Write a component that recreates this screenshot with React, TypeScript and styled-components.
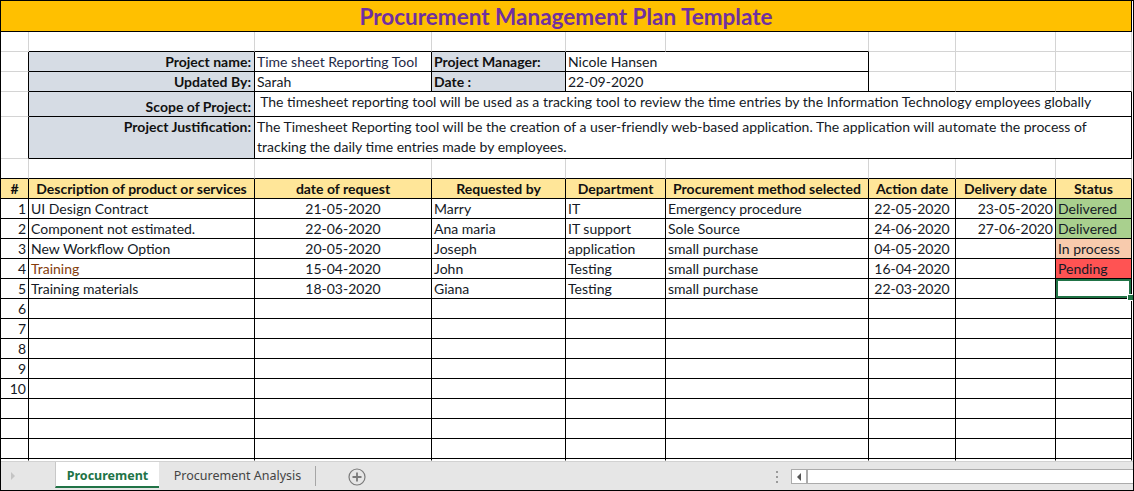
import React from 'react'
import styled, { createGlobalStyle } from 'styled-components'

type Line = 'k' | 'g' | 'n'

const lineColor = (l?: Line) => (l === 'k' ? '#000' : l === 'n' ? 'transparent' : '#d4d4d4')

const GlobalStyle = createGlobalStyle`
  html, body {
    margin: 0;
    padding: 0;
    background: #fff;
  }
`

const Frame = styled.div`
  width: 1134px;
  height: 491px;
  box-sizing: border-box;
  border: 1px solid #000;
  background: #fff;
  display: flex;
  flex-direction: column;
  overflow: hidden;
`

const Sheet = styled.div`
  display: grid;
  grid-template-columns: 28px 226px 177px 134px 100px 203px 87px 100px 76px;
  grid-template-rows: 31px 20px 20px 20px 25px 42px 20px 20px repeat(13, 20px) 2px;
  font-family: Lato, 'Liberation Sans', sans-serif;
  font-size: 14px;
  color: #151a26;
`

type CellProps = {
  $span?: number
  $r?: Line
  $b?: Line
  $bg?: string
  $align?: 'left' | 'center' | 'right'
  $valign?: 'top' | 'middle' | 'bottom'
  $bold?: boolean
  $color?: string
}

const justify = { left: 'flex-start', center: 'center', right: 'flex-end' }
const alignItems = { top: 'flex-start', middle: 'center', bottom: 'flex-end' }

const Cell = styled.div<CellProps>`
  box-sizing: border-box;
  grid-column: span ${(p) => p.$span ?? 1};
  border-right: 1px solid ${(p) => lineColor(p.$r)};
  border-bottom: 1px solid ${(p) => lineColor(p.$b)};
  background: ${(p) => p.$bg ?? 'transparent'};
  display: flex;
  justify-content: ${(p) => justify[p.$align ?? 'left']};
  align-items: ${(p) => alignItems[p.$valign ?? 'middle']};
  padding: 0 2px 0 2px;
  line-height: 19px;
  white-space: pre;
  overflow: hidden;
  font-weight: ${(p) => (p.$bold ? 700 : 400)};
  color: ${(p) => p.$color ?? 'inherit'};
`

const TitleCell = styled(Cell)`
  justify-content: center;
  background: #ffc000;
  color: #7030a0;
  font-size: 22.5px;
  font-weight: 700;
  padding-top: 1px;
`

const LabelCell = styled(Cell)`
  background: #d6dce4;
  font-weight: 700;
  color: #111;
  padding-right: 3px;
`

const WrapCell = styled(Cell)`
  display: block;
  white-space: normal;
  line-height: 20px;
  padding-top: 0;
`

const HeadCell = styled(Cell)`
  background: #ffe699;
  font-weight: 700;
  color: #111;
  justify-content: center;
`

const statusBg: Record<string, string> = {
  Delivered: '#a9d08e',
  'In process': '#f8cbad',
  Pending: '#ff5353',
}

const StatusCell = styled(Cell)<{ $status?: string; $selected?: boolean }>`
  position: relative;
  overflow: visible;
  background: ${(p) => (p.$status ? statusBg[p.$status] : 'transparent')};
  box-shadow: ${(p) => (p.$selected ? 'inset 0 0 0 2px #217346' : 'none')};
`

const FillHandle = styled.span`
  position: absolute;
  right: -3px;
  bottom: -3px;
  width: 5px;
  height: 5px;
  background: #217346;
  border: 1px solid #fff;
  z-index: 2;
`

const TabBar = styled.div`
  flex: 1;
  display: flex;
  align-items: stretch;
  background: #e6e6e6;
  border-top: 1px solid #d2d2d2;
  font-family: 'Noto Sans', 'Open Sans', sans-serif;
  font-size: 12.5px;
`

const NavArea = styled.div`
  width: 54px;
  display: flex;
  align-items: center;
  padding-left: 10px;
  box-sizing: border-box;
`

const NavArrow = styled.span`
  width: 0;
  height: 0;
  border-left: 4px solid #c4c4c4;
  border-top: 4px solid transparent;
  border-bottom: 4px solid transparent;
`

const SheetTab = styled.div<{ $active?: boolean; $width: number }>`
  width: ${(p) => p.$width}px;
  margin-bottom: 2px;
  padding-top: 2px;
  display: flex;
  align-items: center;
  justify-content: center;
  background: ${(p) => (p.$active ? '#fff' : 'transparent')};
  color: ${(p) => (p.$active ? '#217346' : '#444')};
  font-weight: ${(p) => (p.$active ? 700 : 400)};
  border-bottom: 2px solid ${(p) => (p.$active ? '#217346' : 'transparent')};
  border-left: 1px solid ${(p) => (p.$active ? '#c8c8c8' : 'transparent')};
  box-sizing: border-box;
`

const Divider = styled.div`
  width: 1px;
  height: 20px;
  align-self: center;
  background: #a6a6a6;
`

const AddButton = styled.div`
  margin-left: 32px;
  display: flex;
  align-items: center;
  margin-top: 1px;
`

const Spacer = styled.div`
  flex: 1;
`

const Dots = styled.div`
  display: flex;
  flex-direction: column;
  justify-content: center;
  gap: 3px;
  margin-right: 13px;
  margin-top: 1px;

  span {
    width: 2px;
    height: 2px;
    background: #9a9a9a;
  }
`

const ScrollTrack = styled.div`
  width: 342px;
  height: 15px;
  align-self: center;
  margin-top: 1px;
  box-sizing: border-box;
  border: 1px solid #ababab;
  border-right: none;
  background: #fff;
  display: flex;
`

const ScrollButton = styled.div`
  width: 14px;
  border-right: 2px solid #ababab;
  display: flex;
  align-items: center;
  justify-content: center;

  &::before {
    content: '';
    border-right: 4px solid #555;
    border-top: 4px solid transparent;
    border-bottom: 4px solid transparent;
  }
`

const headers = [
  '#',
  'Description of product or services',
  'date of request',
  'Requested by',
  'Department',
  'Procurement method selected',
  'Action date',
  'Delivery date',
  'Status',
]

type Row = {
  desc: string
  requested: string
  by: string
  dept: string
  method: string
  action: string
  delivery: string
  status: string
  descColor?: string
}

const rows: Row[] = [
  { desc: 'UI Design Contract', requested: '21-05-2020', by: 'Marry', dept: 'IT', method: 'Emergency procedure', action: '22-05-2020', delivery: '23-05-2020', status: 'Delivered' },
  { desc: 'Component not estimated.', requested: '22-06-2020', by: 'Ana maria', dept: 'IT support', method: 'Sole Source', action: '24-06-2020', delivery: '27-06-2020', status: 'Delivered' },
  { desc: 'New Workflow Option', requested: '20-05-2020', by: 'Joseph', dept: 'application', method: 'small purchase', action: '04-05-2020', delivery: '', status: 'In process' },
  { desc: 'Training', requested: '15-04-2020', by: 'John', dept: 'Testing', method: 'small purchase', action: '16-04-2020', delivery: '', status: 'Pending', descColor: '#843c0c' },
  { desc: 'Training materials', requested: '18-03-2020', by: 'Giana', dept: 'Testing', method: 'small purchase', action: '22-03-2020', delivery: '', status: '' },
]

const blankRow = (key: string, b: Line, count = 9, r: Line = 'g') =>
  Array.from({ length: count }, (_, i) => <Cell key={`${key}-${i}`} $r={r} $b={b} />)

const App: React.FC = () => {
  const empty = 13 - rows.length

  return (
    <>
      <GlobalStyle />
      <Frame>
        <Sheet>
          <TitleCell $span={9} $r="k" $b="k">
            Procurement Management Plan Template
          </TitleCell>

          {/* spacer row above the project details */}
          <Cell $r="g" $b="g" />
          {blankRow('r2a', 'k', 5)}
          {blankRow('r2b', 'g', 3)}

          <Cell $r="k" $b="g" />
          <LabelCell $r="k" $b="k" $align="right">Project name:</LabelCell>
          <Cell $r="k" $b="k" $color="#1f2b48">Time sheet Reporting Tool</Cell>
          <LabelCell $r="k" $b="k">Project Manager:</LabelCell>
          <Cell $span={2} $r="k" $b="k">Nicole Hansen</Cell>
          {blankRow('r3', 'g', 3)}

          <Cell $r="k" $b="g" />
          <LabelCell $r="k" $b="k" $align="right">Updated By:</LabelCell>
          <Cell $r="k" $b="k">Sarah</Cell>
          <LabelCell $r="k" $b="k">Date :</LabelCell>
          <Cell $span={2} $r="k" $b="k">22-09-2020</Cell>
          {blankRow('r4', 'k', 3)}

          <Cell $r="k" $b="g" />
          <LabelCell $r="k" $b="k" $align="right" $valign="bottom">Scope of Project:</LabelCell>
          <Cell $span={7} $r="k" $b="k" $valign="top">
            {' The timesheet reporting tool will be used as a tracking tool to review the time entries by the Information Technology employees globally'}
          </Cell>

          <Cell $r="k" $b="g" />
          <LabelCell $r="k" $b="k" $align="right" $valign="top">Project Justification:</LabelCell>
          <WrapCell $span={7} $r="k" $b="k">
            The Timesheet Reporting tool will be the creation of a user-friendly web-based application. The application will automate the process of
            <br />
            tracking the daily time entries made by employees.
          </WrapCell>

          {blankRow('r7', 'k')}

          {headers.map((h) => (
            <HeadCell key={h} $r="k" $b="k">
              {h}
            </HeadCell>
          ))}

          {rows.map((row, i) => (
            <React.Fragment key={row.desc}>
              <Cell $r="k" $b="k" $align="right">{i + 1}</Cell>
              <Cell $r="k" $b="k" $color={row.descColor}>{row.desc}</Cell>
              <Cell $r="k" $b="k" $align="center">{row.requested}</Cell>
              <Cell $r="k" $b="k">{row.by}</Cell>
              <Cell $r="k" $b="k">{row.dept}</Cell>
              <Cell $r="k" $b="k">{row.method}</Cell>
              <Cell $r="k" $b="k" $align="center">{row.action}</Cell>
              <Cell $r="k" $b="k" $align="right">{row.delivery}</Cell>
              <StatusCell $r="k" $b="k" $status={row.status || undefined} $selected={!row.status}>
                {row.status}
                {!row.status && <FillHandle />}
              </StatusCell>
            </React.Fragment>
          ))}

          {Array.from({ length: empty }, (_, i) => (
            <React.Fragment key={`e${i}`}>
              <Cell $r="k" $b="k" $align="right">{i + rows.length + 1 <= 10 ? i + rows.length + 1 : ''}</Cell>
              {blankRow(`e${i}`, 'k', 8, 'k')}
            </React.Fragment>
          ))}

          {blankRow('tail', 'n', 9, 'k')}
        </Sheet>

        <TabBar>
          <NavArea>
            <NavArrow />
          </NavArea>
          <SheetTab $active $width={104}>Procurement</SheetTab>
          <SheetTab $width={156}>Procurement Analysis</SheetTab>
          <Divider />
          <AddButton>
            <svg width="18" height="18" viewBox="0 0 18 18">
              <circle cx="9" cy="9" r="8" fill="none" stroke="#7a7a7a" strokeWidth="1.2" />
              <path d="M9 4.5v9M4.5 9h9" stroke="#7a7a7a" strokeWidth="1.8" />
            </svg>
          </AddButton>
          <Spacer />
          <Dots>
            <span />
            <span />
            <span />
          </Dots>
          <ScrollTrack>
            <ScrollButton />
          </ScrollTrack>
        </TabBar>
      </Frame>
    </>
  )
}

export default App
